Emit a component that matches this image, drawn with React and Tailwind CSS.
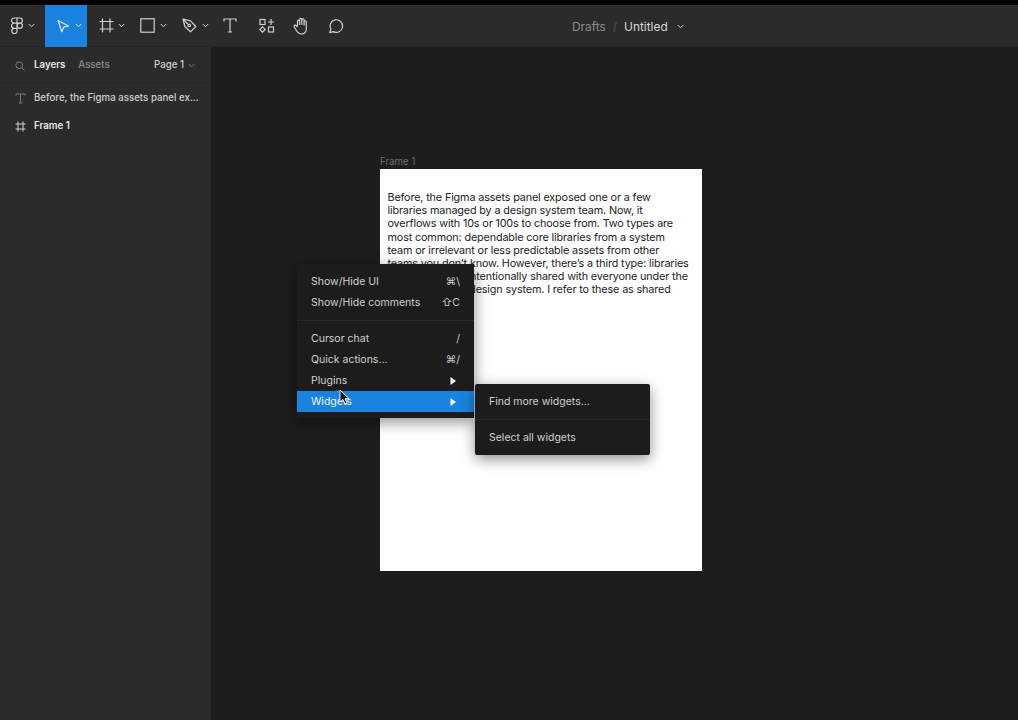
import React from "react";

const Chevron = ({ className = "" }) => (
  <svg width="7" height="5" viewBox="0 0 7 5" fill="none" className={className}>
    <path d="M0.8 1 L3.5 3.8 L6.2 1" stroke="currentColor" strokeWidth="1" />
  </svg>
);

const Ic = ({ w = 20, h = 20, children, className = "" }) => (
  <svg width={w} height={h} viewBox={`0 0 ${w} ${h}`} fill="none" stroke="currentColor" strokeWidth="1.2" className={className}>
    {children}
  </svg>
);

const FigmaLogo = () => (
  <Ic w={12} h={17}>
    <path d="M6 1H3.2a2.6 2.6 0 0 0 0 5.2H6zM6 1h2.8a2.6 2.6 0 0 1 0 5.2H6zM6 6.2H3.2a2.6 2.6 0 0 0 0 5.2H6zM8.8 6.2a2.6 2.6 0 1 1 0 5.2a2.6 2.6 0 0 1 0-5.2zM6 11.4H3.2A2.6 2.6 0 1 0 6 14z" />
  </Ic>
);

const Tool = ({ children, chevron = true, className = "", gap = "gap-[5px]" }) => (
  <div className={`flex items-center ${gap} ${className}`}>
    {children}
    {chevron && <Chevron />}
  </div>
);

const Row = ({ label, hint, arrow, active }) => (
  <div className={`flex h-[21px] items-center justify-between pl-[14px] pr-[14px] ${active ? "bg-[#1a83e0] text-[#f0f6fc]" : "text-[#d0d0d0]"}`}>
    <span>{label}</span>
    {hint && <span className="whitespace-pre text-[#c8c8c8]">{hint}</span>}
    {arrow && (
      <svg width="6" height="8" viewBox="0 0 6 8" className="mr-[4px] text-white" fill="currentColor">
        <path d="M0.5 0 L6 4 L0.5 8 Z" />
      </svg>
    )}
  </div>
);

export default function App() {
  return (
    <div className="relative flex h-[720px] w-[1018px] flex-col overflow-hidden bg-[#1d1d1d] font-['Inter',sans-serif] text-[10.5px]">
      <div className="h-[5px] shrink-0 bg-black" />
      <header className="relative flex h-[42px] shrink-0 items-center border-b border-[#242424] bg-[#2b2b2b] text-[#cfcfcf]">
        <Tool className="w-[45px] pl-[11px]"><FigmaLogo /></Tool>
        <Tool className="h-[42px] w-[42px] bg-[#1a83e0] pl-[11px] text-[#d8ecfd]">
          <Ic w={14} h={14}>
            <path d="M2 1.5 L12.5 7 L7.8 8.2 L5.8 12.8 Z" strokeLinejoin="round" />
          </Ic>
        </Tool>
        <Tool className="ml-[11.5px]" gap="gap-[4px]">
          <Ic w={15} h={15}>
            <path d="M3.5 0.5V14.5M11 0.5V14.5M0.5 3.5H14.5M0.5 11H14.5" />
          </Ic>
        </Tool>
        <Tool className="ml-[15px]">
          <Ic w={15} h={15}>
            <rect x="0.8" y="0.8" width="13.4" height="13.4" />
          </Ic>
        </Tool>
        <Tool className="ml-[15px]">
          <Ic w={15} h={15}>
            <path d="M1 1 L8.5 2.8 L13.8 8.5 L8.5 13.8 L2.8 8.5 Z M1 1 L6.2 6.4" strokeLinejoin="round" />
            <circle cx="7.2" cy="7.4" r="1.3" />
          </Ic>
        </Tool>
        <Tool chevron={false} className="ml-[14.5px]">
          <Ic w={14} h={15}>
            <path d="M1 3.5V1H13V3.5M7 1V14M4.8 14H9.2" />
          </Ic>
        </Tool>
        <Tool chevron={false} className="ml-[22px]">
          <Ic w={16} h={15}>
            <rect x="1" y="1.5" width="5" height="5" />
            <path d="M12 1V7M9 4H15" />
            <path d="M3.5 8.8L6.2 11.5L3.5 14.2L0.8 11.5Z" />
            <rect x="9.5" y="9" width="5" height="5" />
          </Ic>
        </Tool>
        <Tool chevron={false} className="ml-[17.5px]">
          <Ic w={17} h={18}>
            <path d="M4.5 9V4.2a1.1 1.1 0 0 1 2.2 0V8M6.7 8V2.5a1.1 1.1 0 0 1 2.2 0V8M8.9 8V3a1.1 1.1 0 0 1 2.2 0V8.5M11.1 8.5V5a1.1 1.1 0 0 1 2.2 0V11.5C13.3 15 11.5 17 8.5 17C5.5 17 4.5 15.5 3.2 13.2L1.2 9.8C0.6 8.6 2.2 7.6 3.2 8.6L4.5 10.2" strokeLinejoin="round" />
          </Ic>
        </Tool>
        <Tool chevron={false} className="ml-[18.5px]">
          <Ic w={16} h={16}>
            <path d="M1.7 14.6 L2.9 11.3 A6.3 6.3 0 1 1 5.3 13.6 Z" strokeLinejoin="round" />
          </Ic>
        </Tool>
        <div className="ml-[228px] flex items-center pt-[2px] text-[11.9px]">
          <span className="text-[#8a8a8a]">Drafts</span>
          <span className="mx-[7px] text-[#555555]">/</span>
          <span className="text-[#d6d6d6]">Untitled</span>
          <Chevron className="ml-[9px]" />
        </div>
      </header>

      <div className="flex flex-1">
        <aside className="w-[211px] shrink-0 border-r border-[#262626] bg-[#2b2b2b] text-[9.7px]">
          <div className="flex h-[36px] items-center border-b border-[#272727] pl-[15px] pr-[15px] pt-[2px]">
            <svg width="10" height="10" viewBox="0 0 10 10" fill="none" stroke="#7d7d7d" strokeWidth="1">
              <circle cx="4.2" cy="4.2" r="3.4" />
              <path d="M6.7 6.7L9.5 9.5" />
            </svg>
            <span className="ml-[9px] font-semibold text-[#e6e6e6]">Layers</span>
            <span className="ml-[13px] font-medium text-[#8c8c8c]">Assets</span>
            <span className="ml-auto font-medium text-[#cfcfcf]">Page 1</span>
            <Chevron className="ml-[4px] text-[#777777]" />
          </div>
          <div className="flex h-[28px] items-center whitespace-nowrap pl-[15px] pt-[2px] font-medium text-[#cfcfcf]">
            <svg width="11" height="11" viewBox="0 0 11 11" fill="none" stroke="#777777" strokeWidth="1" className="mr-[8px]">
              <path d="M1 2.5V1H10V2.5M5.5 1V10M3.8 10H7.2" />
            </svg>
            Before, the Figma assets panel ex...
          </div>
          <div className="flex h-[28px] items-center pl-[15px] pt-[2px] font-semibold text-[#e6e6e6]">
            <svg width="11" height="11" viewBox="0 0 11 11" fill="none" stroke="#d0d0d0" strokeWidth="1" className="mr-[8px]">
              <path d="M3 0.5V10.5M8 0.5V10.5M0.5 3H10.5M0.5 8H10.5" />
            </svg>
            Frame 1
          </div>
        </aside>
      </div>

      {/* free canvas: frame and context menus */}
      <div className="absolute left-[380px] top-[155px] text-[9.7px] text-[#6f6f6f]">Frame 1</div>
      <div className="absolute left-[380px] top-[169px] h-[402px] w-[322px] whitespace-nowrap bg-white pl-[7.5px] pt-[22px] text-[10.8px] leading-[13.2px] tracking-[-0.14px] text-[#222222]">
        Before, the Figma assets panel exposed one or a few<br />
        libraries managed by a design system team. Now, it<br />
        overflows with 10s or 100s to choose from. Two types are<br />
        most common: dependable core libraries from a system<br />
        team or irrelevant or less predictable assets from other<br />
        teams you don’t know. However, there’s a third type: libraries<br />
        that were made intentionally shared with everyone under the<br />
        banners of their design system. I refer to these as shared
      </div>

      <div className="absolute left-[297px] top-[264px] h-[154px] w-[177px] bg-[#1c1c1c] pt-[7px] shadow-[0_4px_14px_rgba(0,0,0,0.45)]">
        <Row label="Show/Hide UI" hint="⌘\" />
        <Row label="Show/Hide comments" hint="⇧C" />
        <div className="my-[7px] h-px bg-[#2c2c2c]" />
        <Row label="Cursor chat" hint="/" />
        <Row label="Quick actions..." hint="⌘/" />
        <Row label="Plugins" arrow />
        <Row label="Widgets" arrow active />
      </div>

      <div className="absolute left-[475px] top-[384px] h-[71px] w-[175px] rounded-[2px] bg-[#1c1c1c] pt-[7px] text-[#d0d0d0] shadow-[0_4px_14px_rgba(0,0,0,0.45)]">
        <div className="flex h-[21px] items-center pl-[14px] pt-[1px]">Find more widgets...</div>
        <div className="my-[7px] h-px bg-[#2c2c2c]" />
        <div className="flex h-[21px] items-center pl-[14px] pt-[1px]">Select all widgets</div>
      </div>

      <svg width="12" height="17" viewBox="0 0 12 17" className="absolute left-[339px] top-[389px]">
        <path d="M1 1 L1 13 L4 10.5 L6 15 L8 14 L6 9.8 L10 9.6 Z" fill="#111111" stroke="#ffffff" strokeWidth="0.9" />
      </svg>
    </div>
  );
}
